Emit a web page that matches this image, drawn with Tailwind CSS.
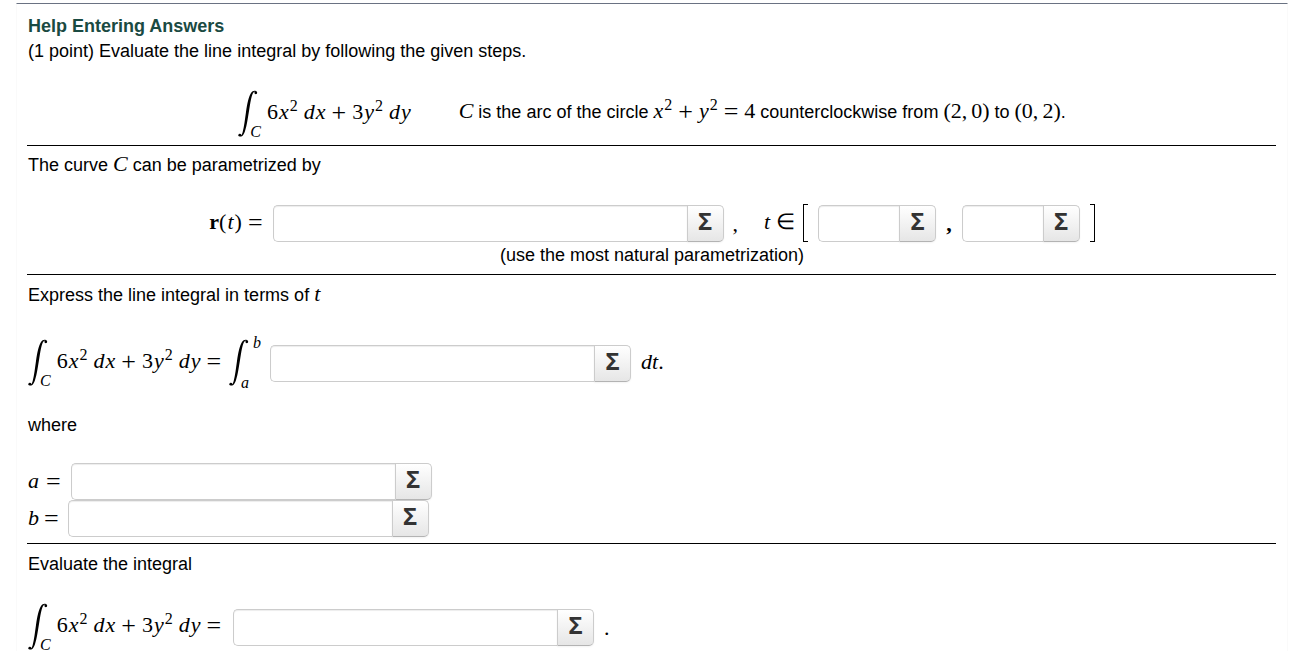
<!DOCTYPE html>
<html lang="en">
<head>
    <meta charset="UTF-8">
    <meta name="viewport" content="width=device-width, initial-scale=1.0">
    <title>Line Integral</title>
    <script src="https://cdn.jsdelivr.net/npm/@tailwindcss/browser@4"></script>
</head>
<body class="bg-white pt-[3px] font-['Liberation_Sans',sans-serif] text-lg/[25px] text-black">
    <svg class="hidden">
        <symbol id="integral" viewBox="0 0 20 48">
            <path d="M18.2 3.4C18 1.4 16 1 14.8 3.4C13.4 6.4 12.4 12 11 21C9.6 30 8.2 38.5 6.4 42.8C5 46 3.2 47.6 1.4 45.6C3.2 46 4 44.4 4.7 42C6.2 36.5 6.9 29.5 8 22C9.3 13 10.7 6.5 13 3C14.8 0 18.4 .2 19 2.4Z"/>
            <circle cx="17.8" cy="2.8" r="1.4"/>
            <circle cx="1.8" cy="45.2" r="1.4"/>
        </symbol>
    </svg>

    <main class="mr-[14px] ml-4 border border-b-0 border-neutral-50 border-t-gray-500 px-[11px] pt-[10px]">
        <a href="#" class="block font-bold text-[#1a4a42]">Help Entering Answers</a>
        <p>(1 point) Evaluate the line integral by following the given steps.</p>

        <div class="mt-[26px] flex h-12 items-center justify-center">
            <span class="flex h-12 font-['Liberation_Serif',serif] text-base/[12px] italic">
                <svg class="h-12 w-5"><use href="#integral"/></svg>
                <span class="-ml-2 self-end">C</span>
            </span>
            <span class="ml-[6px] pb-[3px] font-['Liberation_Serif',serif] text-[22px]/[25px] whitespace-nowrap">6<i class="ml-px">x</i><sup class="ml-px text-base">2</sup><i class="ml-[6px]">d</i><i class="ml-px">x</i><span class="mx-[6px] align-[-2px] text-[26px]/[20px]">+</span>3<i class="ml-px">y</i><sup class="ml-px text-base">2</sup><i class="ml-[6px]">d</i><i class="ml-px">y</i></span>
            <p class="ml-12 pb-[3px] whitespace-nowrap"><i class="font-['Liberation_Serif',serif] text-[22px]/[20px]">C</i> is the arc of the circle <span class="font-['Liberation_Serif',serif] text-[22px]/[20px]"><i>x</i><sup class="ml-px text-base">2</sup><span class="mx-[6px] align-[-2px] text-[26px]/[20px]">+</span><i>y</i><sup class="ml-px text-base">2</sup><span class="mx-[6px] align-[-2px] text-[26px]/[20px]">=</span>4</span> counterclockwise from <span class="font-['Liberation_Serif',serif] text-[22px]/[20px]">(2,<span class="ml-1">0)</span></span> to <span class="font-['Liberation_Serif',serif] text-[22px]/[20px]">(0,<span class="ml-1">2)</span></span>.</p>
        </div>

        <hr class="mt-[7px] mb-[7px] -ml-px border-black">
        <p>The curve <i class="font-['Liberation_Serif',serif] text-[22px]/[20px]">C</i> can be parametrized by</p>

        <div class="mt-[26px] flex items-center justify-center font-['Liberation_Serif',serif] text-[22px]/[25px]">
            <label for="curve" class="pb-[3px] whitespace-nowrap"><b>r</b>(<i class="mx-px">t</i>)<span class="ml-[6px] align-[-2px] text-[26px]/[20px]">=</span></label>
            <span class="ml-[10px] flex h-[37px]">
                <input id="curve" type="text" class="w-[414px] rounded-l-[5px] border border-r-0 border-[#ccc] px-2 shadow-[inset_0_1px_1px_#00000013]">
                <button type="button" aria-label="Equation editor" class="w-[37px] rounded-r-[5px] border border-[#ccc] border-b-[#b3b3b3] bg-linear-to-b from-white to-[#e6e6e6] pb-[5px] font-['Open_Sans',sans-serif] text-2xl/[24px] font-bold text-[#333] shadow-xs">Σ</button>
            </span>
            <span class="ml-[9px]">,</span>
            <span class="ml-[26px] pb-1"><i>t</i><span class="ml-[6px]">∈</span></span>
            <span class="ml-2 h-[38px] w-[5px] border border-r-0 border-black"></span>
            <span class="ml-[10px] flex h-[37px]">
                <input type="text" aria-label="Lower bound of t" class="w-[81px] rounded-l-[5px] border border-r-0 border-[#ccc] px-2 shadow-[inset_0_1px_1px_#00000013]">
                <button type="button" aria-label="Equation editor" class="w-[37px] rounded-r-[5px] border border-[#ccc] border-b-[#b3b3b3] bg-linear-to-b from-white to-[#e6e6e6] pb-[5px] font-['Open_Sans',sans-serif] text-2xl/[24px] font-bold text-[#333] shadow-xs">Σ</button>
            </span>
            <b class="ml-[10px]">,</b>
            <span class="ml-[10px] flex h-[37px]">
                <input type="text" aria-label="Upper bound of t" class="w-[81px] rounded-l-[5px] border border-r-0 border-[#ccc] px-2 shadow-[inset_0_1px_1px_#00000013]">
                <button type="button" aria-label="Equation editor" class="w-[37px] rounded-r-[5px] border border-[#ccc] border-b-[#b3b3b3] bg-linear-to-b from-white to-[#e6e6e6] pb-[5px] font-['Open_Sans',sans-serif] text-2xl/[24px] font-bold text-[#333] shadow-xs">Σ</button>
            </span>
            <span class="ml-[10px] h-[38px] w-[5px] border border-l-0 border-black"></span>
        </div>
        <p class="mt-px text-center">(use the most natural parametrization)</p>

        <hr class="mt-[6px] mb-[8px] -ml-px border-black">
        <p>Express the line integral in terms of <i class="font-['Liberation_Serif',serif] text-[22px]/[20px]">t</i></p>

        <div class="mt-[31px] flex items-center font-['Liberation_Serif',serif] text-[22px]/[25px]">
            <label for="integrand" class="flex items-center whitespace-nowrap">
                <span class="flex h-12 text-base/[12px] italic">
                    <svg class="h-12 w-5"><use href="#integral"/></svg>
                    <span class="-ml-2 self-end">C</span>
                </span>
                <span class="ml-[6px] pb-[3px]">6<i class="ml-px">x</i><sup class="ml-px text-base">2</sup><i class="ml-[6px]">d</i><i class="ml-px">x</i><span class="mx-[6px] align-[-2px] text-[26px]/[20px]">+</span>3<i class="ml-px">y</i><sup class="ml-px text-base">2</sup><i class="ml-[6px]">d</i><i class="ml-px">y</i><span class="ml-[6px] align-[-2px] text-[26px]/[20px]">=</span></span>
                <span class="ml-2 flex h-12 text-base/[8px] italic">
                    <svg class="h-12 w-5"><use href="#integral"/></svg>
                    <span class="-ml-2 flex flex-col justify-between"><span class="ml-3">b</span><span>a</span></span>
                </span>
            </label>
            <span class="ml-[9px] flex h-[37px]">
                <input id="integrand" type="text" class="w-[324px] rounded-l-[5px] border border-r-0 border-[#ccc] px-2 shadow-[inset_0_1px_1px_#00000013]">
                <button type="button" aria-label="Equation editor" class="w-[37px] rounded-r-[5px] border border-[#ccc] border-b-[#b3b3b3] bg-linear-to-b from-white to-[#e6e6e6] pb-[5px] font-['Open_Sans',sans-serif] text-2xl/[24px] font-bold text-[#333] shadow-xs">Σ</button>
            </span>
            <span class="ml-[10px] pb-1"><i>dt</i>.</span>
        </div>

        <p class="mt-[26px]">where</p>

        <div class="mt-[25px] font-['Liberation_Serif',serif] text-[22px]/[25px]">
            <div class="flex items-center">
                <label for="lower" class="pb-[3px]"><i>a</i><span class="ml-[7px] align-[-2px] text-[26px]/[20px]">=</span></label>
                <span class="ml-[10px] flex h-[37px]">
                    <input id="lower" type="text" class="w-[324px] rounded-l-[5px] border border-r-0 border-[#ccc] px-2 shadow-[inset_0_1px_1px_#00000013]">
                    <button type="button" aria-label="Equation editor" class="w-[37px] rounded-r-[5px] border border-[#ccc] border-b-[#b3b3b3] bg-linear-to-b from-white to-[#e6e6e6] pb-[5px] font-['Open_Sans',sans-serif] text-2xl/[24px] font-bold text-[#333] shadow-xs">Σ</button>
                </span>
            </div>
            <div class="flex items-center">
                <label for="upper" class="pb-[3px]"><i>b</i><span class="ml-[5px] align-[-2px] text-[26px]/[20px]">=</span></label>
                <span class="ml-[9px] flex h-[37px]">
                    <input id="upper" type="text" class="w-[324px] rounded-l-[5px] border border-r-0 border-[#ccc] px-2 shadow-[inset_0_1px_1px_#00000013]">
                    <button type="button" aria-label="Equation editor" class="w-[37px] rounded-r-[5px] border border-[#ccc] border-b-[#b3b3b3] bg-linear-to-b from-white to-[#e6e6e6] pb-[5px] font-['Open_Sans',sans-serif] text-2xl/[24px] font-bold text-[#333] shadow-xs">Σ</button>
                </span>
            </div>
        </div>

        <hr class="mt-[6px] mb-[8px] -ml-px border-black">
        <p>Evaluate the integral</p>

        <div class="mt-[26px] flex items-center font-['Liberation_Serif',serif] text-[22px]/[25px]">
            <label for="answer" class="flex items-center whitespace-nowrap">
                <span class="flex h-12 text-base/[12px] italic">
                    <svg class="h-12 w-5"><use href="#integral"/></svg>
                    <span class="-ml-2 self-end">C</span>
                </span>
                <span class="ml-[6px] pb-[3px]">6<i class="ml-px">x</i><sup class="ml-px text-base">2</sup><i class="ml-[6px]">d</i><i class="ml-px">x</i><span class="mx-[6px] align-[-2px] text-[26px]/[20px]">+</span>3<i class="ml-px">y</i><sup class="ml-px text-base">2</sup><i class="ml-[6px]">d</i><i class="ml-px">y</i><span class="ml-[6px] align-[-2px] text-[26px]/[20px]">=</span></span>
            </label>
            <span class="ml-3 flex h-[37px]">
                <input id="answer" type="text" class="w-[324px] rounded-l-[5px] border border-r-0 border-[#ccc] px-2 shadow-[inset_0_1px_1px_#00000013]">
                <button type="button" aria-label="Equation editor" class="w-[37px] rounded-r-[5px] border border-[#ccc] border-b-[#b3b3b3] bg-linear-to-b from-white to-[#e6e6e6] pb-[5px] font-['Open_Sans',sans-serif] text-2xl/[24px] font-bold text-[#333] shadow-xs">Σ</button>
            </span>
            <span class="ml-[10px]">.</span>
        </div>
    </main>
</body>
</html>
